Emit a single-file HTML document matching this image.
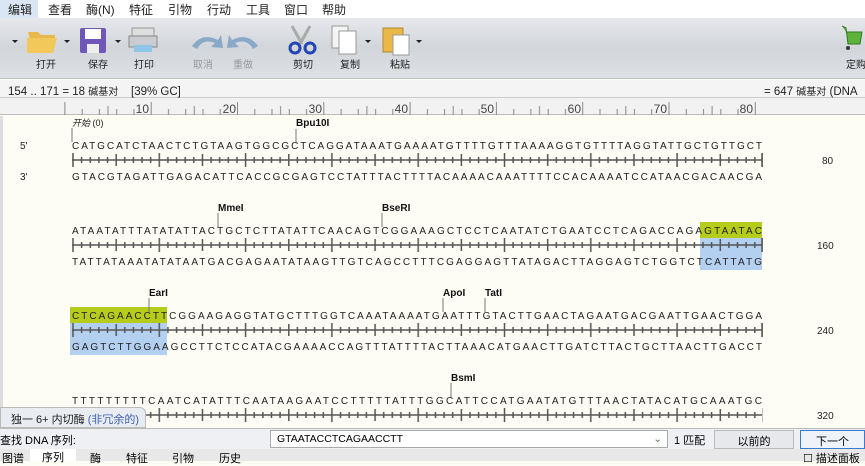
<!DOCTYPE html>
<html><head><meta charset="utf-8"><style>
*{margin:0;padding:0;box-sizing:border-box}
body{width:865px;height:461px;overflow:hidden;background:#fdfcf5;font-family:"Liberation Sans","Noto Sans CJK SC",sans-serif;position:relative}
.abs{position:absolute}
#menu{left:0;top:0;width:865px;height:18px;background:#fff;font-size:12px;color:#222}
#menu span{position:absolute;top:1px}
#tb{left:0;top:18px;width:865px;height:61px;background:linear-gradient(#e6e8ec,#d2d5da 50%,#dde0e4);border-bottom:1px solid #b9bcc1}
.lbl{position:absolute;top:38px;font-size:10px;color:#222;white-space:nowrap}
.dis{color:#999}
#stat{left:0;top:80px;width:865px;height:18px;background:#f4f4f4;font-size:11.5px;color:#222;border-bottom:1px solid #ccc}
#ruler{left:0;top:98px;width:865px;height:17px;background:#f2f2f2;border-bottom:1px solid #bbb}
#find{left:0;top:428px;width:865px;height:21px;background:#eef0f3;border-top:1px solid #bbb;font-size:11px}
#tabs{left:0;top:449px;width:865px;height:12px;background:#e8e8e8;font-size:11px}
</style></head><body>
<div id="menu" class="abs">
<span style="left:0;width:38px;height:18px;background:#dbe6f4;top:0"></span>
<span style="left:8px">编辑</span><span style="left:48px">查看</span><span style="left:86px">酶(N)</span><span style="left:129px">特征</span><span style="left:168px">引物</span><span style="left:207px">行动</span><span style="left:246px">工具</span><span style="left:284px">窗口</span><span style="left:322px">帮助</span>
</div>
<div id="tb" class="abs">
<svg class="abs" style="left:0;top:0" width="865" height="61">
<path d="M12 22l3 3 3-3z M64 22l3 3 3-3z M115 22l3 3 3-3z M365 22l3 3 3-3z M416 22l3 3 3-3z" fill="#222"/>
<path d="M28 14h10l3 3h14v4H30z" fill="#e8b84a"/><path d="M27 20h30l-4 15H27z" fill="#f3c85a"/>
<rect x="80" y="10" width="26" height="25" rx="2" fill="#6e57b8"/><rect x="85" y="11" width="16" height="10" fill="#fff"/><rect x="87" y="26" width="12" height="9" fill="#eee"/>
<rect x="132" y="10" width="22" height="8" fill="#ddd" stroke="#999"/><rect x="129" y="18" width="28" height="11" fill="#c9ccd0" stroke="#888"/><rect x="134" y="27" width="18" height="7" fill="#8ec5e8"/>
<path d="M192 28q10-14 26-6l3-5 2 13-12-1 4-4q-12-5-18 6z" fill="#8aa9c8"/>
<path d="M258 28q-10-14-26-6l-3-5-2 13 12-1-4-4q12-5 18 6z" fill="#8aa9c8"/>
<path d="M292 8l10 18M310 8l-10 18" stroke="#aaa" stroke-width="3"/><circle cx="295" cy="30" r="5" fill="none" stroke="#2246b4" stroke-width="3"/><circle cx="310" cy="30" r="5" fill="none" stroke="#2246b4" stroke-width="3"/>
<rect x="332" y="8" width="16" height="22" fill="#f4f4f4" stroke="#999"/><rect x="339" y="13" width="17" height="23" fill="#fff" stroke="#999"/>
<rect x="383" y="10" width="20" height="24" fill="#e9b848" stroke="#b58a30"/><rect x="393" y="17" width="16" height="20" fill="#fff" stroke="#999"/>
<path d="M842 8l4 2 2 16h12l2-12h-16" fill="#5cb23a" stroke="#2f7a1e"/><circle cx="848" cy="30" r="2" fill="#333"/>
</svg>
<span class="lbl" style="left:36px">打开</span><span class="lbl" style="left:88px">保存</span><span class="lbl" style="left:134px">打印</span><span class="lbl dis" style="left:193px">取消</span><span class="lbl dis" style="left:233px">重做</span><span class="lbl" style="left:293px">剪切</span><span class="lbl" style="left:340px">复制</span><span class="lbl" style="left:390px">粘贴</span><span class="lbl" style="left:846px">定购</span>
</div>
<div id="stat" class="abs"><span class="abs" style="left:8px;top:3px">154 .. 171 = 18 <span style="font-size:10px">碱基对</span> &nbsp;&nbsp;&nbsp;[39% GC]</span><span class="abs" style="left:764px;top:3px;white-space:nowrap">= 647 <span style="font-size:10px">碱基对</span> (DNA</span></div>
<div id="ruler" class="abs">
<svg width="865" height="17"><defs><pattern id="rp" x="64.4" y="0" width="86.3" height="17" patternUnits="userSpaceOnUse"><path d="M0.5 4V17M17.8 11v6M35 11v6M43.6 8v9M52.3 11v6M69.5 11v6" stroke="#888" stroke-width="1"/></pattern></defs><rect x="64" y="0" width="700" height="17" fill="url(#rp)"/>
<g font-size="12" fill="#444" text-anchor="end" font-family="Liberation Sans"><text x="149" y="15">10</text><text x="236" y="15">20</text><text x="322" y="15">30</text><text x="408" y="15">40</text><text x="494" y="15">50</text><text x="581" y="15">60</text><text x="667" y="15">70</text><text x="753" y="15">80</text></g></svg></div>
<div class="abs" style="left:0;top:116px;width:3px;height:312px;background:#ddd"></div>
<svg class="abs" style="left:0;top:116px" width="865" height="312">
<defs><pattern id="sp" x="72" y="37" width="86.3" height="85" patternUnits="userSpaceOnUse"><path d="M1 0v14M9.6 4v6M18.3 4v6M26.9 4v6M35.5 4v6M44.2 1v12M52.8 4v6M61.4 4v6M70 4v6M78.7 4v6" stroke="#555" stroke-width="1.5"/></pattern></defs>
<rect x="700" y="106" width="62" height="16" fill="#b5cc1a"/><rect x="700" y="122" width="62" height="32" fill="#b4d0f0"/>
<rect x="70" y="191" width="97" height="16" fill="#b5cc1a"/><rect x="70" y="207" width="97" height="32" fill="#b4d0f0"/>
<g stroke="#555" stroke-width="1.5"><line x1="72" y1="44" x2="762" y2="44"/><line x1="72" y1="129" x2="762" y2="129"/><line x1="72" y1="214" x2="762" y2="214"/><line x1="72" y1="299" x2="762" y2="299"/></g>
<rect x="71" y="37" width="692" height="14" fill="url(#sp)"/><rect x="71" y="122" width="692" height="14" fill="url(#sp)"/><rect x="71" y="207" width="692" height="14" fill="url(#sp)"/><rect x="71" y="292" width="692" height="14" fill="url(#sp)"/>
<line x1="762" y1="37" x2="762" y2="51" stroke="#555" stroke-width="1.5"/><line x1="762" y1="122" x2="762" y2="136" stroke="#555" stroke-width="1.5"/><line x1="762" y1="207" x2="762" y2="221" stroke="#555" stroke-width="1.5"/>
<g stroke="#777" stroke-width="1"><path d="M72 12v14M296 13v13M218 97v14M382 97v14M149 182v14M443 182v14M485 182v14M451 267v14"/></g>
<g font-family="Liberation Sans" font-size="10" fill="#222" letter-spacing="0">
<text x="72" y="33" textLength="690" lengthAdjust="spacing">CATGCATCTAACTCTGTAAGTGGCGCTCAGGATAAATGAAAATGTTTTGTTTAAAAGGTGTTTTAGGTATTGCTGTTGCT</text>
<text x="72" y="64" textLength="690" lengthAdjust="spacing">GTACGTAGATTGAGACATTCACCGCGAGTCCTATTTACTTTTACAAAACAAATTTTCCACAAAATCCATAACGACAACGA</text>
<text x="72" y="118" textLength="690" lengthAdjust="spacing">ATAATATTTATATATTACTGCTCTTATATTCAACAGTCGGAAAGCTCCTCAATATCTGAATCCTCAGACCAGAGTAATAC</text>
<text x="72" y="149" textLength="690" lengthAdjust="spacing">TATTATAAATATATAATGACGAGAATATAAGTTGTCAGCCTTTCGAGGAGTTATAGACTTAGGAGTCTGGTCTCATTATG</text>
<text x="72" y="203" textLength="690" lengthAdjust="spacing">CTCAGAACCTTCGGAAGAGGTATGCTTTGGTCAAATAAAATGAATTTGTACTTGAACTAGAATGACGAATTGAACTGGA</text>
<text x="72" y="234" textLength="690" lengthAdjust="spacing">GAGTCTTGGAAGCCTTCTCCATACGAAAACCAGTTTATTTTACTTAAACATGAACTTGATCTTACTGCTTAACTTGACCT</text>
<text x="72" y="288" textLength="690" lengthAdjust="spacing">TTTTTTTTTCAATCATATTTCAATAAGAATCCTTTTTATTTGGCATTCCATGAATATGTTTAACTATACATGCAAATGC</text>
<text x="20" y="33">5'</text><text x="20" y="64">3'</text>
<text x="822" y="48">80</text><text x="817" y="133">160</text><text x="817" y="218">240</text><text x="817" y="303">320</text>
</g>
<g font-family="Liberation Sans" font-size="10" font-weight="bold" fill="#111"><text x="296" y="10">Bpu10I</text><text x="218" y="95">MmeI</text><text x="382" y="95">BseRI</text><text x="149" y="180">EarI</text><text x="443" y="180">ApoI</text><text x="485" y="180">TatI</text><text x="451" y="265">BsmI</text></g>
<text x="72" y="10" font-size="9" fill="#222" font-style="italic" font-family="Liberation Sans,Noto Sans CJK SC,sans-serif">开始 <tspan font-style="normal">(0)</tspan></text>
</svg>
<div class="abs" style="left:0;top:407px;width:146px;height:21px;background:#e9edf2;border:1px solid #bbb;border-radius:0 6px 0 0;font-size:11px;padding:3px 0 0 10px;color:#222">独一 6+ 内切酶 <span style="color:#3a5fb0">(非冗余的)</span></div>
<div id="find" class="abs"><span class="abs" style="left:0;top:3px">查找 DNA 序列:</span>
<div class="abs" style="left:270px;top:1px;width:398px;height:18px;background:#fff;border:1px solid #aaa;padding:2px 6px;font-size:10.5px">GTAATACCTCAGAACCTT<span style="position:absolute;right:5px;color:#777">⌄</span></div>
<span class="abs" style="left:674px;top:3px">1 匹配</span>
<div class="abs" style="left:714px;top:1px;width:80px;height:19px;border:1px solid #bbb;background:#e6e8eb;text-align:center;padding-top:2px">以前的</div>
<div class="abs" style="left:800px;top:1px;width:65px;height:19px;border:1px solid #3a7ad0;background:#eef3fa;text-align:center;padding-top:2px">下一个</div></div>
<div id="tabs" class="abs"><span class="abs" style="left:2px;top:1px">图谱</span><span class="abs" style="left:30px;top:0;width:46px;height:12px;background:#fff;text-align:center">序列</span><span class="abs" style="left:90px;top:1px">酶</span><span class="abs" style="left:126px;top:1px">特征</span><span class="abs" style="left:172px;top:1px">引物</span><span class="abs" style="left:219px;top:1px">历史</span><span class="abs" style="left:803px;top:1px">☐ 描述面板</span></div>
</body></html>
